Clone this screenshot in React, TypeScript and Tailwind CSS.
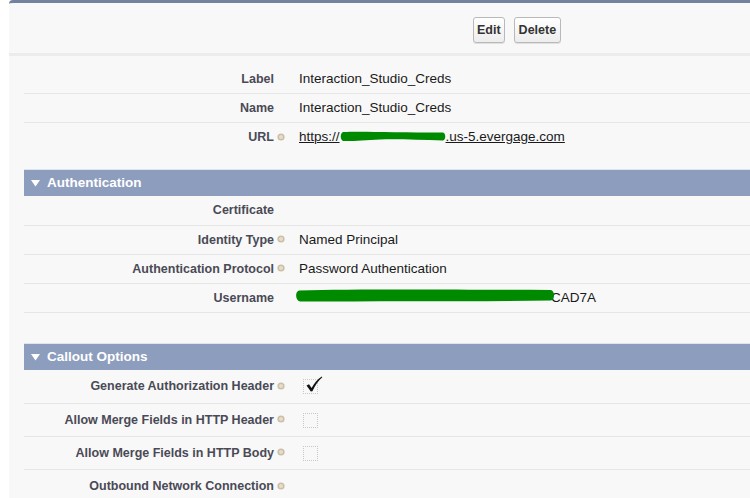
import React from "react";

const Help = () => (
  <span className="inline-block w-0 align-middle">
    <svg width="8" height="8" viewBox="0 0 8 8" className="ml-[3px] -mt-[2px] block">
      <circle cx="4" cy="4" r="3.6" fill="#cbbfa8" />
      <circle cx="4" cy="4" r="2" fill="#e6ddcc" />
    </svg>
  </span>
);

const Row = ({
  label,
  help,
  h,
  border = true,
  children,
}: {
  label: string;
  help?: boolean;
  h: string;
  border?: boolean;
  children?: React.ReactNode;
}) => (
  <div className={`flex items-center ${h} ${border ? "border-b border-[#e6e6e6]" : ""}`}>
    <div className="w-[250px] text-right text-[12.5px] font-bold text-[#4a4a56] whitespace-nowrap">
      {label}
      {help && <Help />}
    </div>
    <div className="ml-[25px] text-[13.5px] text-[#1a1a1a] whitespace-nowrap">{children}</div>
  </div>
);

const Header = ({ title }: { title: string }) => (
  <div className="flex items-center bg-[#8d9dbd] border-t border-[#dfe3ea] text-white font-bold text-[13.5px] pl-[7px] h-[27px]">
    <svg width="9" height="7" viewBox="0 0 9 7" className="mr-[7px]">
      <path d="M0 0 L9 0 L4.5 6.5 Z" fill="#ffffff" />
    </svg>
    {title}
  </div>
);

const Box = ({ checked }: { checked?: boolean }) => (
  <span className="relative inline-block w-[15px] h-[15px] border border-dotted border-[#c8c8c8] ml-[4px] align-middle">
    {checked && (
      <svg width="18" height="17" viewBox="0 0 18 17" className="absolute left-[1px] -top-[4px]">
        <path
          d="M1.5 9.5 L4 8.2 L6.6 12 C9 7.5 12.5 3.5 16.8 0.6 L17.3 1.2 C13 5 10 9.5 7.4 15.3 L5.8 15.6 Z"
          fill="#111"
        />
      </svg>
    )}
  </span>
);

const btn =
  "h-[26px] px-[3px] rounded-[3px] border border-[#b9b9b9] bg-gradient-to-b from-white to-[#ededed] text-[12.5px] font-bold text-[#333] shadow-[0_1px_0_#e0e0e0]";

export default function App() {
  return (
    <div className="w-[750px] h-[498px] bg-white overflow-hidden font-['Liberation_Sans',Arial,sans-serif]">
      <div className="ml-[9px] h-[498px] bg-[#f8f8f8] border-t-[3px] border-[#72829f] rounded-tl-[4px]">
        <div className="h-[53px] border-b-[3px] border-[#ececec] flex items-start pt-[14px] pl-[464px] gap-[9px]">
          <button className={btn}>Edit</button>
          <button className={`${btn} px-[4px]`}>Delete</button>
        </div>
        <div className="pl-[15px]">
          <div className="pt-[9px]">
            <Row label="Label" h="h-[29px]">Interaction_Studio_Creds</Row>
            <Row label="Name" h="h-[29px]">Interaction_Studio_Creds</Row>
            <Row label="URL" help h="h-[29px]" border={false}>
              <span className="underline">
                https://
                <svg width="106" height="11" viewBox="0 0 106 11" className="inline-block align-middle -mt-[2px]">
                  <path
                    d="M3 1 C20 0 55 1.5 103 1.5 C106 2.5 106 8.5 103 9.5 C80 9 60 8 40 8.5 C25 9 12 10.5 3 10 C0 9 0 2 3 1 Z"
                    fill="#008a00"
                  />
                </svg>
                .us-5.evergage.com
              </span>
            </Row>
          </div>
          <div className="h-[17px]" />
          <Header title="Authentication" />
          <Row label="Certificate" h="h-[30px]" />
          <Row label="Identity Type" help h="h-[29px]">Named Principal</Row>
          <Row label="Authentication Protocol" help h="h-[29px]">Password Authentication</Row>
          <Row label="Username" h="h-[29px]">
            <span className="relative inline-block -ml-[4px]">
              <span className="inline-block w-[256px]" />
              CAD7A
              <svg width="260" height="13" viewBox="0 0 260 13" className="absolute left-0 top-[1px]">
                <path
                  d="M4 1.5 C60 0 150 0.5 256 1 C260 2 260 10.5 256 11.5 C180 12.5 90 12 5 12.5 C0 11.5 0 2.5 4 1.5 Z"
                  fill="#008a00"
                />
              </svg>
            </span>
          </Row>
          <div className="h-[30px]" />
          <Header title="Callout Options" />
          <Row label="Generate Authorization Header" help h="h-[34px]">
            <Box checked />
          </Row>
          <Row label="Allow Merge Fields in HTTP Header" help h="h-[33px]">
            <Box />
          </Row>
          <Row label="Allow Merge Fields in HTTP Body" help h="h-[33px]">
            <Box />
          </Row>
          <Row label="Outbound Network Connection" help h="h-[33px]" border={false} />
        </div>
      </div>
    </div>
  );
}
